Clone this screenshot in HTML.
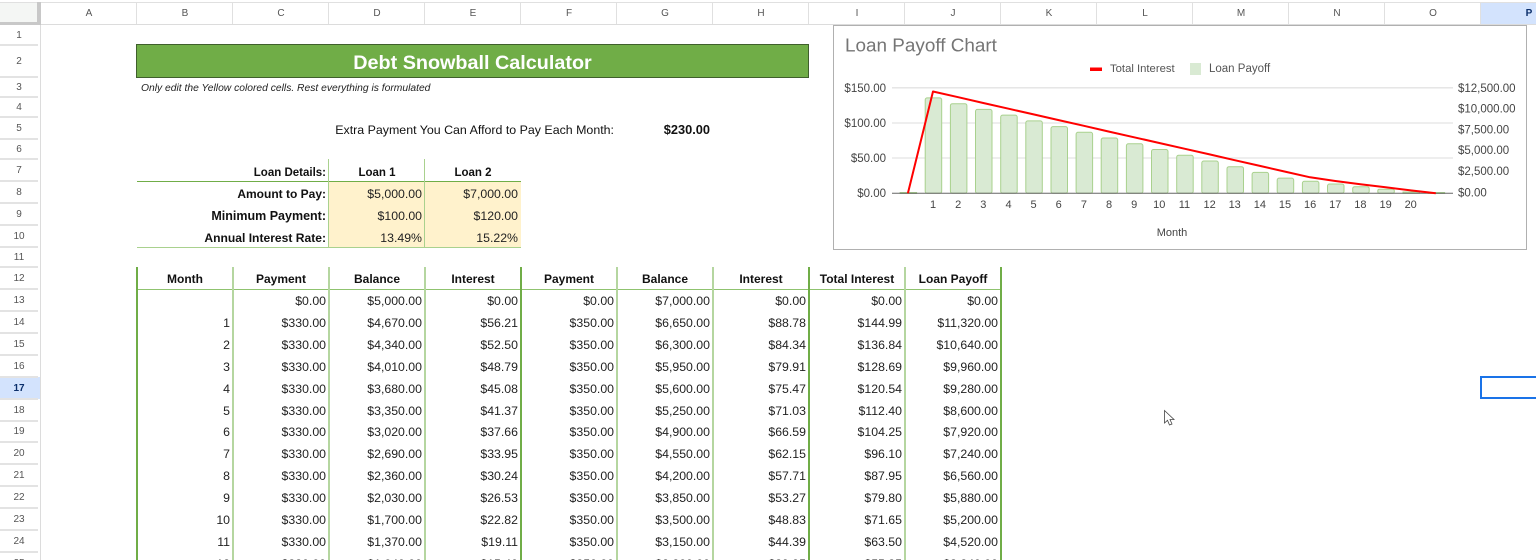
<!DOCTYPE html>
<html><head><meta charset="utf-8"><title>Debt Snowball Calculator</title>
<style>
html,body{margin:0;padding:0;background:#fff;overflow:hidden}
#p{position:relative;width:1536px;height:560px;overflow:hidden;font-family:"Liberation Sans",sans-serif;color:#111;background:#fff;filter:blur(0.35px)}
.a{position:absolute}
.c{position:absolute;top:4px;height:20px;line-height:19px;width:96px;text-align:center;font-size:10px;color:#555}
.r{position:absolute;left:0;width:38px;text-align:center;font-size:10px;color:#555;border-bottom:2px solid #e3e3e3;box-sizing:border-box;padding-top:1px}
.v{position:absolute;width:2px;background:#b5d6a0}
.V{position:absolute;width:2px;background:#70ad47}
.t{position:absolute;font-size:11.5px;line-height:22px;text-align:right;white-space:nowrap}
table{position:absolute;left:137px;top:269.2px;display:grid;grid-template-columns:repeat(9,96px);grid-auto-rows:21.9px;width:864px;font-size:12.3px}
tbody,tr{display:contents}
colgroup{display:none}
td{display:block;height:21.9px;padding:0 3px 0 0;text-align:right;white-space:nowrap;line-height:21.9px;color:#222;box-sizing:border-box;overflow:hidden}
tr.h td{font-weight:bold;text-align:center;font-size:12px;color:#111;padding:0}
text{font-family:"Liberation Sans",sans-serif}
</style></head><body><div id="p">

<!-- column headers -->
<div class="a" style="left:0;top:2px;width:1536px;height:1px;background:#e0e0e0"></div>
<div class="a" style="left:0;top:3px;width:37px;height:19px;background:#f4f6f4"></div>
<div class="a" style="left:0;top:22px;width:41px;height:3px;background:#c8c8c8"></div>
<div class="a" style="left:37px;top:2px;width:4px;height:23px;background:#c8c8c8"></div>
<div class="a" style="left:41px;top:24px;width:1495px;height:1px;background:#dcdcdc"></div>
<div class="a" style="left:1481px;top:3px;width:55px;height:21px;background:#d3e3fd"></div>
<div class="a" style="left:136px;top:3px;width:1px;height:21px;background:#e0e0e0"></div>
<div class="a" style="left:232px;top:3px;width:1px;height:21px;background:#e0e0e0"></div>
<div class="a" style="left:328px;top:3px;width:1px;height:21px;background:#e0e0e0"></div>
<div class="a" style="left:424px;top:3px;width:1px;height:21px;background:#e0e0e0"></div>
<div class="a" style="left:520px;top:3px;width:1px;height:21px;background:#e0e0e0"></div>
<div class="a" style="left:616px;top:3px;width:1px;height:21px;background:#e0e0e0"></div>
<div class="a" style="left:712px;top:3px;width:1px;height:21px;background:#e0e0e0"></div>
<div class="a" style="left:808px;top:3px;width:1px;height:21px;background:#e0e0e0"></div>
<div class="a" style="left:904px;top:3px;width:1px;height:21px;background:#e0e0e0"></div>
<div class="a" style="left:1000px;top:3px;width:1px;height:21px;background:#e0e0e0"></div>
<div class="a" style="left:1096px;top:3px;width:1px;height:21px;background:#e0e0e0"></div>
<div class="a" style="left:1192px;top:3px;width:1px;height:21px;background:#e0e0e0"></div>
<div class="a" style="left:1288px;top:3px;width:1px;height:21px;background:#e0e0e0"></div>
<div class="a" style="left:1384px;top:3px;width:1px;height:21px;background:#e0e0e0"></div>
<div class="a" style="left:1480px;top:3px;width:1px;height:21px;background:#e0e0e0"></div>
<div class="c" style="left:41px">A</div><div class="c" style="left:137px">B</div><div class="c" style="left:233px">C</div><div class="c" style="left:329px">D</div><div class="c" style="left:425px">E</div><div class="c" style="left:521px">F</div><div class="c" style="left:617px">G</div><div class="c" style="left:713px">H</div><div class="c" style="left:809px">I</div><div class="c" style="left:905px">J</div><div class="c" style="left:1001px">K</div><div class="c" style="left:1097px">L</div><div class="c" style="left:1193px">M</div><div class="c" style="left:1289px">N</div><div class="c" style="left:1385px">O</div><div class="c" style="left:1481px;color:#0b2f6b;font-weight:bold;width:96px">P</div>

<!-- row headers -->
<div class="a" style="left:40px;top:25px;width:1px;height:535px;background:#dcdcdc"></div>
<div class="a" style="left:0;top:377px;width:40px;height:22px;background:#d3e3fd"></div>
<div class="r" style="top:25px;height:21px;line-height:19px">1</div>
<div class="r" style="top:46px;height:32px;line-height:30px">2</div>
<div class="r" style="top:78px;height:20px;line-height:18px">3</div>
<div class="r" style="top:98px;height:20px;line-height:18px">4</div>
<div class="r" style="top:118px;height:22px;line-height:20px">5</div>
<div class="r" style="top:140px;height:20px;line-height:18px">6</div>
<div class="r" style="top:160px;height:22px;line-height:20px">7</div>
<div class="r" style="top:182px;height:22px;line-height:20px">8</div>
<div class="r" style="top:204px;height:22px;line-height:20px">9</div>
<div class="r" style="top:226px;height:22px;line-height:20px">10</div>
<div class="r" style="top:248px;height:20px;line-height:18px">11</div>
<div class="r" style="top:268px;height:22px;line-height:20px">12</div>
<div class="r" style="top:290px;height:22px;line-height:20px">13</div>
<div class="r" style="top:312px;height:22px;line-height:20px">14</div>
<div class="r" style="top:334px;height:22px;line-height:20px">15</div>
<div class="r" style="top:356px;height:22px;line-height:20px">16</div>
<div class="r" style="top:378px;height:22px;line-height:20px;color:#0b2f6b;font-weight:bold">17</div>
<div class="r" style="top:400px;height:22px;line-height:20px">18</div>
<div class="r" style="top:421px;height:22px;line-height:20px">19</div>
<div class="r" style="top:443px;height:22px;line-height:20px">20</div>
<div class="r" style="top:465px;height:22px;line-height:20px">21</div>
<div class="r" style="top:487px;height:22px;line-height:20px">22</div>
<div class="r" style="top:509px;height:22px;line-height:20px">23</div>
<div class="r" style="top:531px;height:22px;line-height:20px">24</div>
<div class="r" style="top:553px;height:22px;line-height:20px;border:0">25</div>

<!-- title -->
<div class="a" style="left:136px;top:44px;width:671px;height:32px;background:#70ad47;border:1px solid #3f5f2c;color:#fff;font-weight:bold;font-size:19.8px;line-height:36px;text-align:center">Debt Snowball Calculator</div>
<div class="a" style="left:141px;top:78px;font-style:italic;font-size:10.3px;line-height:21px;color:#222;white-space:nowrap;padding-top:0">Only edit the Yellow colored cells. Rest everything is formulated</div>
<div class="t" style="left:300px;top:119px;width:314px;font-size:12.4px">Extra Payment You Can Afford to Pay Each Month:</div>
<div class="t" style="left:620px;top:119px;width:90px;font-weight:bold;font-size:12.8px">$230.00</div>

<!-- loan details -->
<div class="a" style="left:329px;top:181px;width:192px;height:66px;background:#fff2cc"></div>
<div class="a" style="left:137px;top:181px;width:384px;height:1px;background:#70ad47"></div>
<div class="a" style="left:137px;top:247px;width:384px;height:1px;background:#a9d18e"></div>
<div class="a" style="left:328px;top:159px;width:1px;height:89px;background:#a9d18e"></div>
<div class="a" style="left:424px;top:159px;width:1px;height:89px;background:#a9d18e"></div>
<div class="t" style="left:137px;top:162px;width:189px;font-weight:bold">Loan Details:</div>
<div class="t" style="left:137px;top:183px;width:189px;font-weight:bold;font-size:12px">Amount to Pay:</div>
<div class="t" style="left:137px;top:205px;width:189px;font-weight:bold;font-size:12.5px">Minimum Payment:</div>
<div class="t" style="left:137px;top:227px;width:189px;font-weight:bold;font-size:12.1px">Annual Interest Rate:</div>
<div class="t" style="left:329px;top:162px;width:96px;font-weight:bold;text-align:center">Loan 1</div>
<div class="t" style="left:425px;top:162px;width:96px;font-weight:bold;text-align:center">Loan 2</div>
<div class="t" style="left:329px;top:183px;width:93px;font-size:12.3px;color:#222">$5,000.00</div>
<div class="t" style="left:425px;top:183px;width:93px;font-size:12.3px;color:#222">$7,000.00</div>
<div class="t" style="left:329px;top:205px;width:93px;font-size:12.3px;color:#222">$100.00</div>
<div class="t" style="left:425px;top:205px;width:93px;font-size:12.3px;color:#222">$120.00</div>
<div class="t" style="left:329px;top:227px;width:93px;font-size:12.3px;color:#222">13.49%</div>
<div class="t" style="left:425px;top:227px;width:93px;font-size:12.3px;color:#222">15.22%</div>

<!-- main table -->
<table>
<tr class="h"><td>Month</td><td>Payment</td><td>Balance</td><td>Interest</td><td>Payment</td><td>Balance</td><td>Interest</td><td>Total Interest</td><td>Loan Payoff</td></tr>
<tr><td></td><td>$0.00</td><td>$5,000.00</td><td>$0.00</td><td>$0.00</td><td>$7,000.00</td><td>$0.00</td><td>$0.00</td><td>$0.00</td></tr>
<tr><td>1</td><td>$330.00</td><td>$4,670.00</td><td>$56.21</td><td>$350.00</td><td>$6,650.00</td><td>$88.78</td><td>$144.99</td><td>$11,320.00</td></tr>
<tr><td>2</td><td>$330.00</td><td>$4,340.00</td><td>$52.50</td><td>$350.00</td><td>$6,300.00</td><td>$84.34</td><td>$136.84</td><td>$10,640.00</td></tr>
<tr><td>3</td><td>$330.00</td><td>$4,010.00</td><td>$48.79</td><td>$350.00</td><td>$5,950.00</td><td>$79.91</td><td>$128.69</td><td>$9,960.00</td></tr>
<tr><td>4</td><td>$330.00</td><td>$3,680.00</td><td>$45.08</td><td>$350.00</td><td>$5,600.00</td><td>$75.47</td><td>$120.54</td><td>$9,280.00</td></tr>
<tr><td>5</td><td>$330.00</td><td>$3,350.00</td><td>$41.37</td><td>$350.00</td><td>$5,250.00</td><td>$71.03</td><td>$112.40</td><td>$8,600.00</td></tr>
<tr><td>6</td><td>$330.00</td><td>$3,020.00</td><td>$37.66</td><td>$350.00</td><td>$4,900.00</td><td>$66.59</td><td>$104.25</td><td>$7,920.00</td></tr>
<tr><td>7</td><td>$330.00</td><td>$2,690.00</td><td>$33.95</td><td>$350.00</td><td>$4,550.00</td><td>$62.15</td><td>$96.10</td><td>$7,240.00</td></tr>
<tr><td>8</td><td>$330.00</td><td>$2,360.00</td><td>$30.24</td><td>$350.00</td><td>$4,200.00</td><td>$57.71</td><td>$87.95</td><td>$6,560.00</td></tr>
<tr><td>9</td><td>$330.00</td><td>$2,030.00</td><td>$26.53</td><td>$350.00</td><td>$3,850.00</td><td>$53.27</td><td>$79.80</td><td>$5,880.00</td></tr>
<tr><td>10</td><td>$330.00</td><td>$1,700.00</td><td>$22.82</td><td>$350.00</td><td>$3,500.00</td><td>$48.83</td><td>$71.65</td><td>$5,200.00</td></tr>
<tr><td>11</td><td>$330.00</td><td>$1,370.00</td><td>$19.11</td><td>$350.00</td><td>$3,150.00</td><td>$44.39</td><td>$63.50</td><td>$4,520.00</td></tr>
<tr><td>12</td><td>$330.00</td><td>$1,040.00</td><td>$15.40</td><td>$350.00</td><td>$2,800.00</td><td>$39.95</td><td>$55.35</td><td>$3,840.00</td></tr>
</table>
<div class="a" style="left:137px;top:289px;width:864px;height:1px;background:#8fc36f"></div>
<div class="V" style="left:136px;top:267px;height:293px"></div>
<div class="v" style="left:232px;top:267px;height:293px"></div>
<div class="v" style="left:328px;top:267px;height:293px"></div>
<div class="v" style="left:424px;top:267px;height:293px"></div>
<div class="V" style="left:520px;top:267px;height:293px"></div>
<div class="v" style="left:616px;top:267px;height:293px"></div>
<div class="v" style="left:712px;top:267px;height:293px"></div>
<div class="V" style="left:808px;top:267px;height:293px"></div>
<div class="v" style="left:904px;top:267px;height:293px"></div>
<div class="V" style="left:1000px;top:267px;height:293px"></div>

<!-- chart -->
<div class="a" style="left:833px;top:25px;width:692px;height:223px;border:1px solid #b0b0b0;background:#fff"></div>
<svg class="a" style="left:0;top:0" width="1536" height="560" viewBox="0 0 1536 560">
<text x="845" y="51.5" font-size="18.9" fill="#757575">Loan Payoff Chart</text>
<rect x="1090" y="67.5" width="12" height="3.5" fill="#ff0000"/>
<text x="1110" y="72" font-size="11.3" fill="#555">Total Interest</text>
<rect x="1190" y="63" width="11" height="12" fill="#d9ead3"/>
<text x="1209" y="72" font-size="11.5" fill="#555">Loan Payoff</text>
<g stroke="#e3e3e3" stroke-width="1.3">
<line x1="892" x2="1453" y1="87.8" y2="87.8"/><line x1="892" x2="1453" y1="123" y2="123"/><line x1="892" x2="1453" y1="158" y2="158"/>
</g>
<g fill="#d9ead3" stroke="#a9d18e" stroke-width="1" transform="translate(0.7 0)">
<rect x="899.4" y="192.5" width="16.5" height="1"/>
<rect x="924.5" y="97.9" width="16.5" height="95.4" rx="2"/>
<rect x="949.7" y="103.7" width="16.5" height="89.6" rx="2"/>
<rect x="974.8" y="109.4" width="16.5" height="83.9" rx="2"/>
<rect x="1000" y="115.1" width="16.5" height="78.2" rx="2"/>
<rect x="1025.1" y="120.9" width="16.5" height="72.4" rx="2"/>
<rect x="1050.3" y="126.6" width="16.5" height="66.7" rx="2"/>
<rect x="1075.4" y="132.3" width="16.5" height="61" rx="2"/>
<rect x="1100.5" y="138" width="16.5" height="55.3" rx="2"/>
<rect x="1125.7" y="143.8" width="16.5" height="49.5" rx="2"/>
<rect x="1150.8" y="149.5" width="16.5" height="43.8" rx="2"/>
<rect x="1176" y="155.2" width="16.5" height="38.1" rx="2"/>
<rect x="1201.1" y="161" width="16.5" height="32.3" rx="2"/>
<rect x="1226.3" y="166.7" width="16.5" height="26.6" rx="2"/>
<rect x="1251.4" y="172.4" width="16.5" height="20.9" rx="2"/>
<rect x="1276.5" y="178.1" width="16.5" height="15.2" rx="2"/>
<rect x="1301.7" y="181.3" width="16.5" height="12" rx="2"/>
<rect x="1326.8" y="184" width="16.5" height="9.3" rx="2"/>
<rect x="1352" y="186.7" width="16.5" height="6.6" rx="2"/>
<rect x="1377.1" y="189.3" width="16.5" height="4" rx="1.5"/>
<rect x="1402.3" y="192" width="16.5" height="1.3"/>
<rect x="1427.4" y="192.5" width="16.5" height="1"/>
</g>
<line x1="892" x2="1453" y1="193.3" y2="193.3" stroke="#666" stroke-width="1"/>
<polyline fill="none" stroke="#ff0000" stroke-width="2" stroke-linejoin="round" points="907.9,193.3 933,91.5 958.2,97.2 983.3,103 1008.5,108.7 1033.6,114.4 1058.7,120.1 1083.9,125.8 1109,131.6 1134.2,137.3 1159.3,143 1184.4,148.7 1209.6,154.4 1234.7,160.2 1259.9,165.9 1285,171.6 1310.1,177.3 1335.3,181 1360.4,184.2 1385.6,187.3 1410.7,190.4 1435.8,193.3"/>
<g font-size="11.5" fill="#444" text-anchor="end">
<text x="886" y="92">$150.00</text><text x="886" y="127">$100.00</text><text x="886" y="162">$50.00</text><text x="886" y="197">$0.00</text>
</g>
<g font-size="11.5" fill="#444">
<text x="1458" y="92">$12,500.00</text><text x="1458" y="112.5">$10,000.00</text><text x="1458" y="133.5">$7,500.00</text><text x="1458" y="154">$5,000.00</text><text x="1458" y="175">$2,500.00</text><text x="1458" y="196.5">$0.00</text>
</g>
<g font-size="11" fill="#444" text-anchor="middle">
<text x="933" y="208">1</text><text x="958.2" y="208">2</text><text x="983.3" y="208">3</text><text x="1008.5" y="208">4</text><text x="1033.6" y="208">5</text><text x="1058.7" y="208">6</text><text x="1083.9" y="208">7</text><text x="1109" y="208">8</text><text x="1134.2" y="208">9</text><text x="1159.3" y="208">10</text><text x="1184.4" y="208">11</text><text x="1209.6" y="208">12</text><text x="1234.7" y="208">13</text><text x="1259.9" y="208">14</text><text x="1285" y="208">15</text><text x="1310.1" y="208">16</text><text x="1335.3" y="208">17</text><text x="1360.4" y="208">18</text><text x="1385.6" y="208">19</text><text x="1410.7" y="208">20</text>
<text x="1172" y="236">Month</text>
</g>
<!-- cursor -->
<path d="M1164.5 410.5 L1164.5 423 L1167.5 420.3 L1169.5 425 L1172 424 L1170 419.5 L1174 419.5 Z" fill="#fff" stroke="#444" stroke-width="0.8"/>
</svg>

<!-- selection -->
<div class="a" style="left:1480px;top:376px;width:60px;height:19px;border:2px solid #1a73e8"></div>
</div></body></html>
